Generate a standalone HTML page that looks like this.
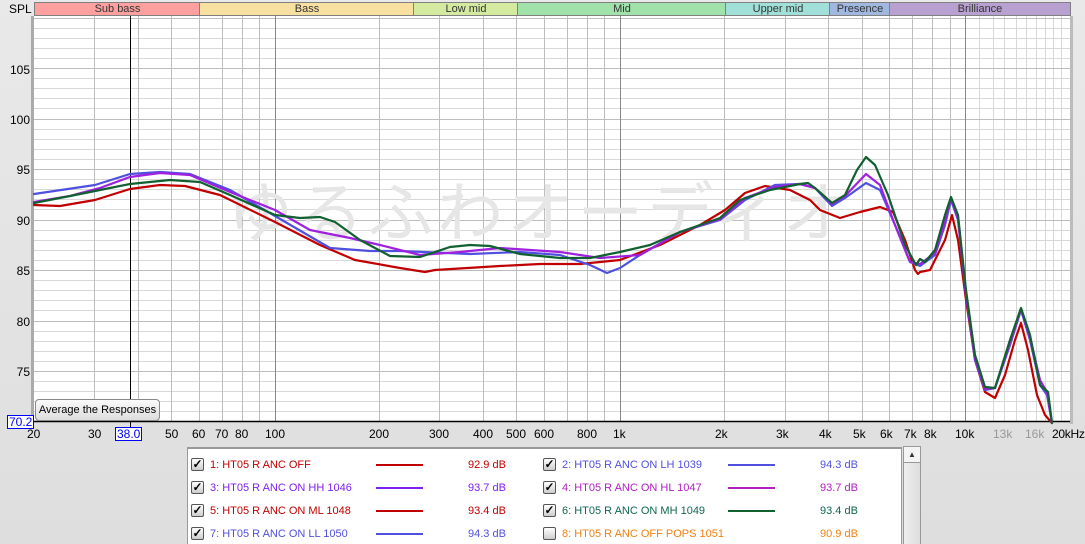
<!DOCTYPE html>
<html><head><meta charset="utf-8"><style>
html,body{margin:0;width:1085px;height:544px;overflow:hidden}
body{background:linear-gradient(#e9e9e9,#dedede);font-family:"Liberation Sans",Arial,sans-serif;position:relative}
.t{position:absolute;font-size:12px;color:#000}
.band{position:absolute;top:2px;height:12px;border:1px solid #808080;border-right:none;font-size:11px;line-height:12px;text-align:center;color:#333}
#leg{position:absolute;left:187px;top:447px;width:713px;height:97px;background:#fff;border:1px solid #999;border-top:2px solid #999;border-bottom:none}
.row{position:absolute;font-size:11px;height:14px;line-height:14px}
.cb{position:absolute;width:11px;height:11px;border:1px solid #555;border-radius:2px;background:linear-gradient(#fff,#ccc);font-size:12px;line-height:11px;text-align:center;color:#000;font-weight:bold}
.ln{position:absolute;width:47px;height:2px}
</style></head><body>
<div class="t" style="left:9px;top:2px;font-size:12px">SPL</div>
<div class="band" style="left:34px;width:165px;background:#ffa0a0">Sub bass</div>
<div class="band" style="left:199px;width:214px;background:#f8e0a0">Bass</div>
<div class="band" style="left:413px;width:104px;background:#d4eaa0">Low mid</div>
<div class="band" style="left:517px;width:208px;background:#a0e2aa">Mid</div>
<div class="band" style="left:725px;width:104px;background:#a0e0d8">Upper mid</div>
<div class="band" style="left:829px;width:60px;background:#a0b8e0">Presence</div>
<div class="band" style="left:889px;width:180px;background:#b8a0d0;border-right:1px solid #808080">Brilliance</div>
<div style="position:absolute;left:31px;top:16px;width:3px;height:406px;background:#aaa"></div>
<div style="position:absolute;left:1070px;top:16px;width:3px;height:408px;background:#bbb"></div>
<svg style="position:absolute;left:0;top:0" width="1085" height="544">
<rect x="34" y="16" width="1036" height="406" fill="#fff"/>
<g stroke="#d8d8d8" stroke-width="1">
<path d="M34 28.5H1070M34 38.5H1070M34 48.5H1070M34 58.5H1070M34 78.5H1070M34 88.5H1070M34 98.5H1070M34 108.5H1070M34 129.5H1070M34 139.5H1070M34 149.5H1070M34 159.5H1070M34 179.5H1070M34 189.5H1070M34 199.5H1070M34 209.5H1070M34 230.5H1070M34 240.5H1070M34 250.5H1070M34 260.5H1070M34 280.5H1070M34 290.5H1070M34 300.5H1070M34 310.5H1070M34 331.5H1070M34 341.5H1070M34 351.5H1070M34 361.5H1070M34 381.5H1070M34 391.5H1070M34 401.5H1070M34 411.5H1070"/>
<path d="M979.5 16V422M993.5 16V422M1004.5 16V422M1016.5 16V422M1026.5 16V422M1036.5 16V422M1045.5 16V422M1053.5 16V422M1061.5 16V422"/>
</g>
<g stroke="#bdbdbd" stroke-width="1">
<path d="M34 18.5H1070M34 68.5H1070M34 119.5H1070M34 169.5H1070M34 220.5H1070M34 270.5H1070M34 321.5H1070M34 371.5H1070"/>
<path d="M94.5 16V422M138.5 16V422M171.5 16V422M199.5 16V422M222.5 16V422M242.5 16V422M259.5 16V422M379.5 16V422M439.5 16V422M483.5 16V422M516.5 16V422M544.5 16V422M567.5 16V422M587.5 16V422M604.5 16V422M724.5 16V422M785.5 16V422M828.5 16V422M862.5 16V422M889.5 16V422M912.5 16V422M932.5 16V422M950.5 16V422"/>
</g>
<path d="M275.5 16V422M620.5 16V422M965.5 16V422" stroke="#888"/>
<path d="M130.5 16V428" stroke="#000"/>
<path d="M34 421.5H1070" stroke="#000" stroke-width="1.5"/>
<text x="540" y="236" font-size="66" fill="#e6e6e6" text-anchor="middle" font-family="Noto Sans CJK JP,sans-serif" letter-spacing="4">ゆるふわオーディオ</text>
<g fill="none" stroke-width="2.2" stroke-linejoin="round" stroke-linecap="round">
<polyline stroke="#c00000" points="34,205 60,206 95,200 130,189 160,185 185,186 220,195 275,222 320,245 355,260 400,268 425,272 435,270 500,266 540,264 580,264 620,260 660,245 700,225 725,210 745,193 765,186 790,190 810,200 820,210 840,218 860,212 880,207 893,212 905,240 915,270 918,274 920,272 930,270 945,240 952,215 958,240 966,300 975,360 985,392 995,398 1005,375 1015,340 1021,323 1028,350 1037,395 1045,415 1052,423"/>
<polyline stroke="#5050e0" points="34,194 95,185 130,174 160,172 190,174 230,190 275,216 330,248 370,251 400,251 470,254 520,252 560,255 590,265 607,273 620,268 640,255 680,232 720,220 745,200 775,185 800,184 815,188 832,206 845,198 866,183 880,190 895,225 910,262 920,266 935,255 945,225 951,200 958,220 966,295 975,360 985,390 995,388 1010,345 1021,310 1030,340 1040,385 1047,395 1052,423"/>
<polyline stroke="#a020e0" points="34,202 70,196 100,188 130,177 160,173 190,175 230,192 275,210 310,230 350,238 380,245 420,255 460,252 500,248 560,252 600,258 640,255 680,232 720,219 745,198 775,187 800,184 815,188 832,204 845,196 866,174 880,185 895,225 910,262 920,264 935,253 945,222 951,198 958,218 966,293 975,358 985,389 995,388 1010,343 1021,309 1030,337 1040,380 1047,392 1052,423"/>
<polyline stroke="#106030" points="34,203 70,196 100,190 130,184 170,180 200,182 230,195 275,215 300,218 320,217 335,222 360,240 390,256 420,257 450,247 470,245 490,246 520,254 560,258 590,258 620,252 650,245 680,232 720,218 740,200 770,190 800,184 808,183 815,188 832,203 845,195 857,170 866,157 875,165 888,195 905,245 916,265 920,259 925,262 935,250 945,215 951,197 958,215 966,290 975,355 985,387 995,388 1010,340 1021,308 1030,335 1040,385 1048,392 1052,423"/>
</g>
</svg>
<div class="t" style="right:1055px;top:63px">105</div>
<div class="t" style="right:1055px;top:113px">100</div>
<div class="t" style="right:1055px;top:163px">95</div>
<div class="t" style="right:1055px;top:214px">90</div>
<div class="t" style="right:1055px;top:264px">85</div>
<div class="t" style="right:1055px;top:315px">80</div>
<div class="t" style="right:1055px;top:365px">75</div>
<div class="t" style="left:7px;top:415px;border:1px solid #00f;color:#00f;background:#fff;padding:0 1px;line-height:12px">70.2</div>
<div style="position:absolute;left:35px;top:399px;width:123px;height:20px;border:1px solid #888;border-radius:4px;background:linear-gradient(#fafafa,#ddd);font-size:11px;line-height:20px;text-align:center">Average the Responses</div>
<div style="position:absolute;top:427px;left:0;width:1085px;height:14px;font-size:12px">
<span class="t" style="left:27px">20</span><span class="t" style="left:88px">30</span>
<span class="t" style="left:115px;border:1px solid #00f;color:#00f;background:#fff;padding:0 1px;line-height:12px">38.0</span>
<span class="t" style="left:165px">50</span><span class="t" style="left:192px">60</span><span class="t" style="left:215px">70</span><span class="t" style="left:235px">80</span><span class="t" style="left:265px">100</span><span class="t" style="left:369px">200</span><span class="t" style="left:429px">300</span><span class="t" style="left:473px">400</span><span class="t" style="left:506px">500</span><span class="t" style="left:534px">600</span><span class="t" style="left:577px">800</span><span class="t" style="left:613px">1k</span><span class="t" style="left:715px">2k</span><span class="t" style="left:776px">3k</span><span class="t" style="left:819px">4k</span><span class="t" style="left:853px">5k</span><span class="t" style="left:880px">6k</span><span class="t" style="left:904px">7k</span><span class="t" style="left:924px">8k</span><span class="t" style="left:955px">10k</span><span class="t" style="left:993px;color:#999">13k</span><span class="t" style="left:1025px;color:#999">16k</span><span class="t" style="left:1052px;letter-spacing:-0.3px">20kHz</span>
</div>
<div id="leg"></div>
<div style="position:absolute;left:903px;top:446px;width:16px;height:98px;background:linear-gradient(90deg,#eee,#ddd);border:1px solid #999;border-bottom:none"></div>
<div style="position:absolute;left:903px;top:446px;width:16px;height:15px;border:1px solid #999;background:#f4f4f4;font-size:8px;text-align:center;line-height:15px;color:#333">▲</div>
<div class="cb" style="left:191px;top:458px">✓</div><div class="row" style="left:210px;top:458px;color:#c00000">1: HT05 R ANC OFF</div><div class="ln" style="left:376px;top:464px;background:#c00000"></div><div class="row" style="left:468px;top:458px;color:#c00000">92.9 dB</div>
<div class="cb" style="left:543px;top:458px">✓</div><div class="row" style="left:562px;top:458px;color:#5050e0">2: HT05 R ANC ON LH 1039</div><div class="ln" style="left:728px;top:464px;background:#5050e0"></div><div class="row" style="left:820px;top:458px;color:#5050e0">94.3 dB</div>
<div class="cb" style="left:191px;top:481px">✓</div><div class="row" style="left:210px;top:481px;color:#8020f0">3: HT05 R ANC ON HH 1046</div><div class="ln" style="left:376px;top:487px;background:#8020f0"></div><div class="row" style="left:468px;top:481px;color:#8020f0">93.7 dB</div>
<div class="cb" style="left:543px;top:481px">✓</div><div class="row" style="left:562px;top:481px;color:#b020c0">4: HT05 R ANC ON HL 1047</div><div class="ln" style="left:728px;top:487px;background:#b020c0"></div><div class="row" style="left:820px;top:481px;color:#b020c0">93.7 dB</div>
<div class="cb" style="left:191px;top:504px">✓</div><div class="row" style="left:210px;top:504px;color:#c00000">5: HT05 R ANC ON ML 1048</div><div class="ln" style="left:376px;top:510px;background:#c00000"></div><div class="row" style="left:468px;top:504px;color:#c00000">93.4 dB</div>
<div class="cb" style="left:543px;top:504px">✓</div><div class="row" style="left:562px;top:504px;color:#106850">6: HT05 R ANC ON MH 1049</div><div class="ln" style="left:728px;top:510px;background:#106030"></div><div class="row" style="left:820px;top:504px;color:#106850">93.4 dB</div>
<div class="cb" style="left:191px;top:527px">✓</div><div class="row" style="left:210px;top:527px;color:#5050e0">7: HT05 R ANC ON LL 1050</div><div class="ln" style="left:376px;top:533px;background:#5050e0"></div><div class="row" style="left:468px;top:527px;color:#5050e0">94.3 dB</div>
<div class="cb" style="left:543px;top:527px"></div><div class="row" style="left:562px;top:527px;color:#f08010">8: HT05 R ANC OFF POPS 1051</div><div class="row" style="left:820px;top:527px;color:#f08010">90.9 dB</div>
</body></html>
